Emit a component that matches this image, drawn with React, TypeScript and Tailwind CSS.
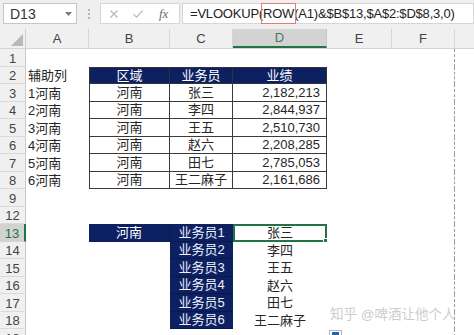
import React from "react";

const GRID = "grid h-[17.5px] grid-cols-[26px_63px_81px_63px_94px_65px_63px_1fr]";

const table = [
  ["1河南", "河南", "张三", "2,182,213"],
  ["2河南", "河南", "李四", "2,844,937"],
  ["3河南", "河南", "王五", "2,510,730"],
  ["4河南", "河南", "赵六", "2,208,285"],
  ["5河南", "河南", "田七", "2,785,053"],
  ["6河南", "河南", "王二麻子", "2,161,686"],
];

const lookup = ["张三", "李四", "王五", "赵六", "田七", "王二麻子"];

function RowHead({ n, active }: { n: number; active?: boolean }) {
  if (active) {
    return (
      <div className="flex items-center justify-center border-b border-r-2 border-b-[#d4d4d4] border-r-[#217346] bg-[#d2d2d2] pt-[2px] text-[#217346]">
        {n}
      </div>
    );
  }
  return (
    <div className="flex items-center justify-center border-b border-r border-b-[#dadada] border-r-[#c9c9c9] bg-[#f0f0f0] pt-[2px] text-[#444]">
      {n}
    </div>
  );
}

function Dashed() {
  return <div className="border-r border-dashed border-[#9c9c9c]" />;
}

function Blank() {
  return <div />;
}

function FormulaBar() {
  return (
    <div className="flex h-[29px] bg-[#efefef] pt-[3px]">
      <div className="ml-[3px] flex h-[21px] w-[74px] items-center border border-[#c6c6c6] bg-white pl-[6px]">
        <span className="text-[14px] text-[#333]">D13</span>
        <svg className="ml-auto mr-[4px]" width="7" height="4" viewBox="0 0 7 4">
          <path d="M0 0h7L3.5 4z" fill="#7a7a7a" />
        </svg>
      </div>
      <div className="ml-[10px] flex h-[21px] w-[3px] flex-col items-center justify-center gap-[2px]">
        <span className="h-[2px] w-[2px] bg-[#b4b4b4]" />
        <span className="h-[2px] w-[2px] bg-[#b4b4b4]" />
        <span className="h-[2px] w-[2px] bg-[#b4b4b4]" />
      </div>
      <div className="ml-[10px] flex h-[21px] w-[80px] items-center border border-[#d6d6d6] bg-white pl-[9px]">
        <svg width="8" height="8" viewBox="0 0 8 8">
          <path d="M0.5 0.5l7 7M7.5 0.5l-7 7" stroke="#b5b5b5" strokeWidth="1.1" />
        </svg>
        <svg className="ml-[15px]" width="10" height="8" viewBox="0 0 10 8">
          <path d="M0.5 4.2l3 3L9.5 0.6" stroke="#b5b5b5" strokeWidth="1.1" fill="none" />
        </svg>
        <span className="ml-[16px] font-['Liberation_Serif',serif] text-[13px] italic leading-none text-[#6a6a6a]">
          fx
        </span>
      </div>
      <div className="ml-[2px] flex h-[21px] flex-1 items-center border border-[#d6d6d6] bg-white pl-[7px] text-[13px] tracking-[-0.2px] text-[#222]">
        =VLOOKUP(
        <span className="relative">
          ROW
          <span className="absolute -bottom-[4px] -left-[2px] -right-[2px] -top-[4px] border border-[#e07b7b]" />
        </span>
        (A1)&amp;$B$13,$A$2:$D$8,3,0)
      </div>
    </div>
  );
}

function ColumnHeader() {
  return (
    <div className="grid h-[20px] grid-cols-[26px_63px_81px_63px_94px_65px_63px_1fr] border-b border-[#d4d4d4] bg-[#f0f0f0] text-[13px] text-[#444]">
      <div className="flex items-end justify-end border-r border-[#d0d0d0] pb-[2px] pr-[2px]">
        <svg width="12" height="12" viewBox="0 0 12 12">
          <path d="M12 0V12H0z" fill="#b9b9b9" />
        </svg>
      </div>
      <div className="flex items-center justify-center border-r border-[#d6d6d6]">A</div>
      <div className="flex items-center justify-center border-r border-[#d6d6d6]">B</div>
      <div className="flex items-center justify-center border-r border-[#d6d6d6]">C</div>
      <div className="flex items-center justify-center border-b-2 border-r border-b-[#217346] border-r-[#c4c4c4] bg-[#d3d3d3] text-[#3f7a5c]">
        D
      </div>
      <div className="flex items-center justify-center border-r border-[#d6d6d6]">E</div>
      <div className="flex items-center justify-center border-r border-[#d6d6d6]">F</div>
      <div />
    </div>
  );
}

export default function App() {
  return (
    <div className="relative h-[335px] w-[474px] overflow-hidden bg-white font-['Liberation_Sans','Noto_Sans_CJK_SC',sans-serif] text-[13px] leading-none">
      <FormulaBar />
      <ColumnHeader />

      <div className="text-[#262626]">
        <div className={GRID}>
          <RowHead n={1} />
          <Blank />
          <Blank />
          <Blank />
          <Blank />
          <Blank />
          <Dashed />
          <Blank />
        </div>

        <div className={GRID}>
          <RowHead n={2} />
          <div className="flex items-center pl-[2px] pt-[1px]">辅助列</div>
          <div className="flex items-center justify-center border border-[#333] bg-[#0c2062] text-white">区域</div>
          <div className="flex items-center justify-center border-b border-r border-t border-[#333] bg-[#0c2062] text-white">
            业务员
          </div>
          <div className="flex items-center justify-center border-b border-r border-t border-[#333] bg-[#0c2062] text-white">
            业绩
          </div>
          <Blank />
          <Dashed />
          <Blank />
        </div>

        {table.map((r, i) => (
          <div key={i} className={GRID}>
            <RowHead n={i + 3} />
            <div className="flex items-center pl-[2px] pt-[1px]">{r[0]}</div>
            <div className="flex items-center justify-center border-b border-l border-r border-[#3a3a3a]">{r[1]}</div>
            <div className="flex items-center justify-center border-b border-r border-[#3a3a3a]">{r[2]}</div>
            <div className="flex items-center justify-end border-b border-r border-[#3a3a3a] pr-[6px]">{r[3]}</div>
            <Blank />
            <Dashed />
            <Blank />
          </div>
        ))}

        <div className={GRID}>
          <RowHead n={9} />
          <Blank />
          <Blank />
          <Blank />
          <Blank />
          <Blank />
          <Dashed />
          <Blank />
        </div>

        <div className={GRID}>
          <RowHead n={12} />
          <Blank />
          <Blank />
          <Blank />
          <Blank />
          <Blank />
          <Dashed />
          <Blank />
        </div>

        {lookup.map((name, i) => (
          <div key={name} className={GRID}>
            <RowHead n={i + 13} active={i === 0} />
            <Blank />
            {i === 0 ? (
              <div className="flex items-center justify-center border-r border-[#0a1a4c] bg-[#0c2062] text-white">河南</div>
            ) : (
              <Blank />
            )}
            <div className="flex items-center justify-center border-b border-[#08184a] bg-[#0c2062] text-[#eef1f8]">
              业务员{i + 1}
            </div>
            {i === 0 ? (
              <div className="relative flex items-center justify-center border-2 border-[#217346]">
                {name}
                <span className="absolute -bottom-[3px] -right-[3px] h-[5px] w-[5px] border border-white bg-[#217346]" />
              </div>
            ) : (
              <div className="flex items-center justify-center">{name}</div>
            )}
            <Blank />
            <Dashed />
            <Blank />
          </div>
        ))}

        <div className={GRID}>
          <RowHead n={19} />
          <Blank />
          <Blank />
          <Blank />
          <Blank />
          <Blank />
          <Dashed />
          <Blank />
        </div>
      </div>

      <div className="absolute left-[330px] top-[308px] text-[13.5px] text-[#cdcdcd]">知乎 @啤酒让他个人</div>
      <div className="absolute left-[329px] top-[330px] flex h-[10px] w-[13px] items-start justify-center border border-[#a9b6c8] bg-white pt-[1px]">
        <span className="h-[4px] w-[7px] bg-[#2f5fa8]" />
      </div>
    </div>
  );
}
